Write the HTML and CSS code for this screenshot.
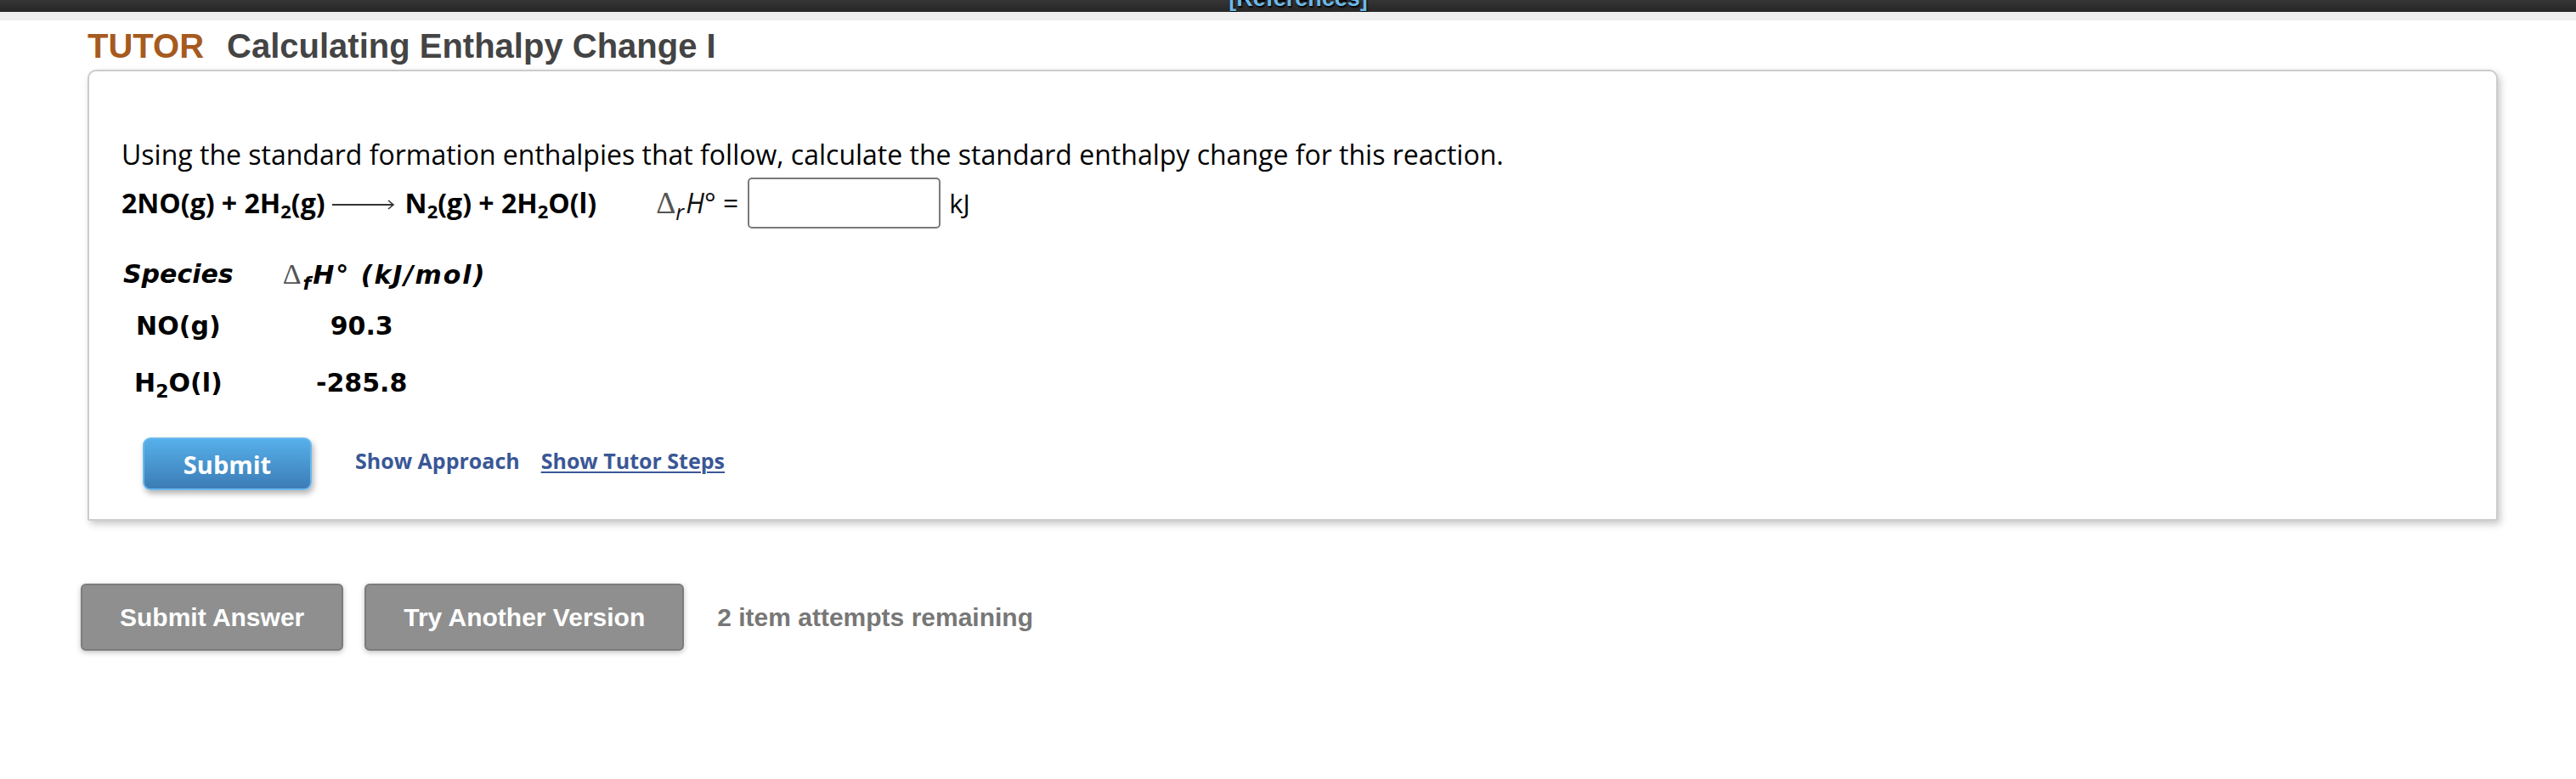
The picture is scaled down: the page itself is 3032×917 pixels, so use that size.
FILE: index.html
```html
<!DOCTYPE html>
<html lang="en">
<head>
<meta charset="utf-8">
<title>TUTOR Calculating Enthalpy Change I</title>
<link rel="stylesheet" href="styles.css">
</head>
<body>
<div class="topbar"><span class="refs">[References]</span></div>
<div class="band"></div>
<main class="page">
  <h1 class="title"><span class="tutor">TUTOR</span><span class="name">Calculating Enthalpy Change I</span></h1>
  <section class="card">
    <p class="question">Using the standard formation enthalpies that follow, calculate the standard enthalpy change for this reaction.</p>
    <div class="equation">
      <span class="eq">2NO(g) + 2H<sub>2</sub>(g)</span>
      <svg class="arrow" width="74" height="16" viewBox="0 0 74 16"><line x1="0" y1="8" x2="72" y2="8" stroke="#333" stroke-width="2"/><polyline points="66,3 72,8 66,13" fill="none" stroke="#333" stroke-width="1.6"/></svg>
      <span class="eq">N<sub>2</sub>(g) + 2H<sub>2</sub>O(l)</span>
      <span class="dh"><span class="delta">Δ</span><i class="dsub">r</i><i>H</i>° =</span>
      <input class="answer" type="text" aria-label="answer">
      <span class="unit">kJ</span>
    </div>
    <div class="table">
      <div class="th c1">Species</div>
      <div class="th c2"><span class="delta">Δ</span><sub>f</sub>H° (kJ/mol)</div>
      <div class="td c1">NO(g)</div>
      <div class="td c2v">90.3</div>
      <div class="td c1 last">H<sub>2</sub>O(l)</div>
      <div class="td c2v last">-285.8</div>
    </div>
    <div class="actions">
      <button class="submit" type="button">Submit</button>
      <a class="link" href="#">Show Approach</a>
      <a class="link underline" href="#">Show Tutor Steps</a>
    </div>
  </section>
  <div class="footer-actions">
    <button class="gray-btn" type="button">Submit Answer</button>
    <button class="gray-btn" type="button">Try Another Version</button>
    <span class="attempts">2 item attempts remaining</span>
  </div>
</main>
</body>
</html>
```

FILE: styles.css
```css
html, body {
  margin: 0;
  padding: 0;
  background: #ffffff;
}

body {
  font-family: "Open Sans", "Liberation Sans", sans-serif;
  color: #000;
}

.topbar {
  height: 14px;
  background: linear-gradient(#353535, #262626);
  overflow: hidden;
  display: flex;
  justify-content: center;
  align-items: flex-start;
  padding-left: 24px;
}

.refs {
  font-family: "Liberation Sans", Arial, sans-serif;
  font-weight: bold;
  font-size: 27px;
  line-height: 28px;
  margin-top: -16px;
  color: #6cb8e8;
  text-shadow: 1px 2px 2px #000;
}

.band {
  height: 10px;
  background: #efefef;
}

.page {
  padding: 0 92px 60px 103px;
}

.title {
  margin: 7px 0 5px 0;
  font-family: "Liberation Sans", Arial, sans-serif;
  font-weight: bold;
  font-size: 40px;
  line-height: 46px;
  display: flex;
}

.tutor {
  color: #a65a1e;
}

.name {
  color: #444444;
  margin-left: 27px;
}

.card {
  border: 2px solid #cccccc;
  border-radius: 10px 10px 2px 2px;
  box-shadow: 3px 4px 8px rgba(0, 0, 0, 0.22);
  padding: 76px 38px 34px 38px;
  background: #fff;
}

.question {
  margin: 0;
  font-size: 32px;
  line-height: 44px;
  color: #000;
}

.equation {
  margin-top: 5px;
  display: flex;
  align-items: center;
  height: 60px;
  font-size: 32px;
}

.eq {
  font-weight: bold;
  line-height: 44px;
}

.eq sub {
  font-size: 22px;
  line-height: 0;
  vertical-align: -6px;
}

.arrow {
  margin: 4px 12px 0 8px;
}

.dh {
  margin-left: 70px;
  font-size: 32px;
  line-height: 44px;
  color: #111;
}

.delta {
  font-family: "Liberation Serif", "Times New Roman", serif;
  color: #555;
  font-style: normal;
}

.dh .delta {
  font-size: 36px;
}

.dsub {
  font-size: 25px;
  vertical-align: -8px;
  line-height: 0;
  margin-right: 2px;
}

.answer {
  margin-left: 11px;
  width: 227px;
  height: 60px;
  box-sizing: border-box;
  border: 2px solid #7a7a7a;
  border-radius: 5px;
  background: #fff;
  padding: 0;
}

.unit {
  margin-left: 10px;
  font-size: 31px;
  line-height: 44px;
}

.table {
  margin-top: 38px;
  margin-left: 2px;
  display: inline-grid;
  grid-template-columns: auto 186px;
  column-gap: 58px;
  row-gap: 28px;
  font-family: "DejaVu Sans", Verdana, sans-serif;
  font-weight: bold;
  font-size: 30px;
  line-height: 32px;
  color: #000;
}

.th {
  font-style: italic;
}

.c1 {
  justify-self: center;
}

.th.c1 {
  justify-self: start;
}

.c2 {
  justify-self: start;
  white-space: nowrap;
  letter-spacing: 2px;
}

.c2 .delta {
  font-weight: normal;
  font-size: 34px;
}

.c2 sub {
  font-size: 22px;
  line-height: 0;
  vertical-align: -7px;
}

.c2v {
  justify-self: center;
}

.td sub {
  font-size: 22px;
  line-height: 0;
  vertical-align: -7px;
}

.last {
  padding-top: 7px;
}

.actions {
  margin-top: 48px;
  padding-left: 25px;
  display: flex;
  align-items: center;
}

.submit {
  width: 199px;
  height: 62px;
  box-sizing: border-box;
  border: 2px solid #6ab8ee;
  border-radius: 9px;
  background: linear-gradient(#56b0ea, #3c7cb6);
  box-shadow: 2px 4px 7px rgba(0, 0, 0, 0.3);
  color: #fff;
  font-family: "Open Sans", sans-serif;
  font-weight: bold;
  font-size: 29px;
  padding: 0;
}

.link {
  font-family: "Open Sans", sans-serif;
  font-weight: bold;
  font-size: 25px;
  color: #3a5796;
  text-decoration: none;
  margin-left: 25px;
  margin-top: -8px;
}

.submit + .link {
  margin-left: 51px;
}

.underline {
  text-decoration: underline;
  text-underline-offset: 3px;
  text-decoration-thickness: 2px;
}

.footer-actions {
  margin-top: 74px;
  margin-left: -8px;
  display: flex;
  align-items: center;
  gap: 25px;
}

.gray-btn {
  height: 79px;
  box-sizing: border-box;
  padding: 0 44px;
  border: 2px solid #7c7c7c;
  border-radius: 6px;
  background: #8f8f8f;
  box-shadow: 0 2px 6px rgba(0, 0, 0, 0.25);
  color: #fff;
  font-family: "Liberation Sans", Arial, sans-serif;
  font-weight: bold;
  font-size: 30px;
}

.attempts {
  margin-left: 14px;
  font-family: "Liberation Sans", Arial, sans-serif;
  font-weight: bold;
  font-size: 30px;
  color: #777777;
}
```
